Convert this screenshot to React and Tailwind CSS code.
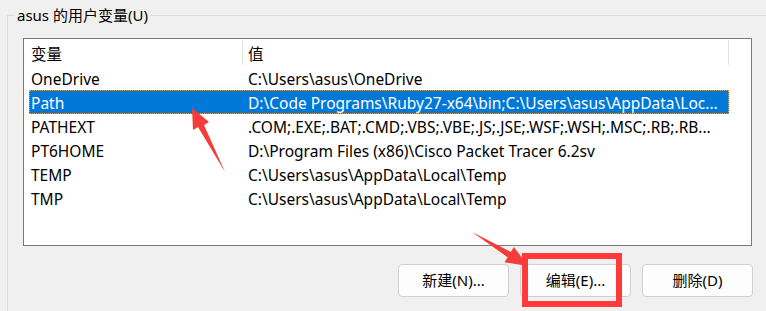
import React from "react";

const rows = [
  ["OneDrive", "C:\\Users\\asus\\OneDrive"],
  ["Path", "D:\\Code Programs\\Ruby27-x64\\bin;C:\\Users\\asus\\AppData\\Loc..."],
  ["PATHEXT", ".COM;.EXE;.BAT;.CMD;.VBS;.VBE;.JS;.JSE;.WSF;.WSH;.MSC;.RB;.RB..."],
  ["PT6HOME", "D:\\Program Files (x86)\\Cisco Packet Tracer 6.2sv"],
  ["TEMP", "C:\\Users\\asus\\AppData\\Local\\Temp"],
  ["TMP", "C:\\Users\\asus\\AppData\\Local\\Temp"],
];

export default function App() {
  return (
    <div
      className="relative w-[766px] h-[311px] overflow-hidden bg-[#f0f0f0] text-[15.5px] text-black"
      style={{ fontFamily: '"Noto Sans", "Noto Sans CJK SC", sans-serif' }}
    >
      <div className="pt-[15px] pl-[7px]">
        <div className="relative border-l border-t border-[#dcdcdc] h-[300px]">
          <div className="absolute left-[7px] -top-[12px] bg-[#f0f0f0] px-[2px] leading-[22px] whitespace-nowrap text-[15px]">
            asus 的用户变量(U)
          </div>
          <div className="ml-[15px] mt-[22px] w-[729px] h-[208px] border border-[#7a7a7a] bg-white pl-[5px] pt-0">
            <div className="flex h-[27px] items-center">
              <div className="w-[213px] pl-[2px] pt-[4px] h-full flex items-center">变量</div>
              <div className="w-px h-[25px] bg-[#e5e5e5]" />
              <div className="w-[485px] pl-[5px] pt-[4px] h-full flex items-center">值</div>
              <div className="w-px h-[25px] bg-[#e5e5e5]" />
            </div>
            {rows.map(([k, v]) => {
              const sel = k === "Path";
              return (
                <div
                  key={k}
                  className={
                    "flex h-[24px] w-[700px] items-center whitespace-nowrap pt-[3px] " +
                    (sel ? "bg-[#0078d7] text-white outline-1 outline-dotted outline-[#f7a23a] -outline-offset-1" : "")
                  }
                >
                  <div className="w-[217px] pl-[2px]">{k}</div>
                  <div className="pl-[2px]">{v}</div>
                </div>
              );
            })}
          </div>
          <div className="mt-[18px] ml-[390px] flex gap-[11px] text-[15px]">
            {["新建(N)...", "编辑(E)...", "删除(D)"].map((t) => (
              <div
                key={t}
                className="w-[111px] h-[33px] rounded-[4px] border border-[#d0d0d0] bg-[#fdfdfd] flex items-center justify-center"
              >
                {t}
              </div>
            ))}
          </div>
        </div>
      </div>
      <div className="absolute left-[522px] top-[253px] w-[100px] h-[54px] border-[6px] border-[#fd3b3b]" />
      <svg className="absolute inset-0 pointer-events-none" width="766" height="311" viewBox="0 0 766 311">
        <polygon fill="#f63b3b" points="192,108 209,122 204,125 225,172 198,127 193,130" />
        <polygon fill="#f63b3b" points="528,266 504.5,262.3 507.6,257.2 472,232 510.8,252 513.9,246.9" />
      </svg>
    </div>
  );
}
